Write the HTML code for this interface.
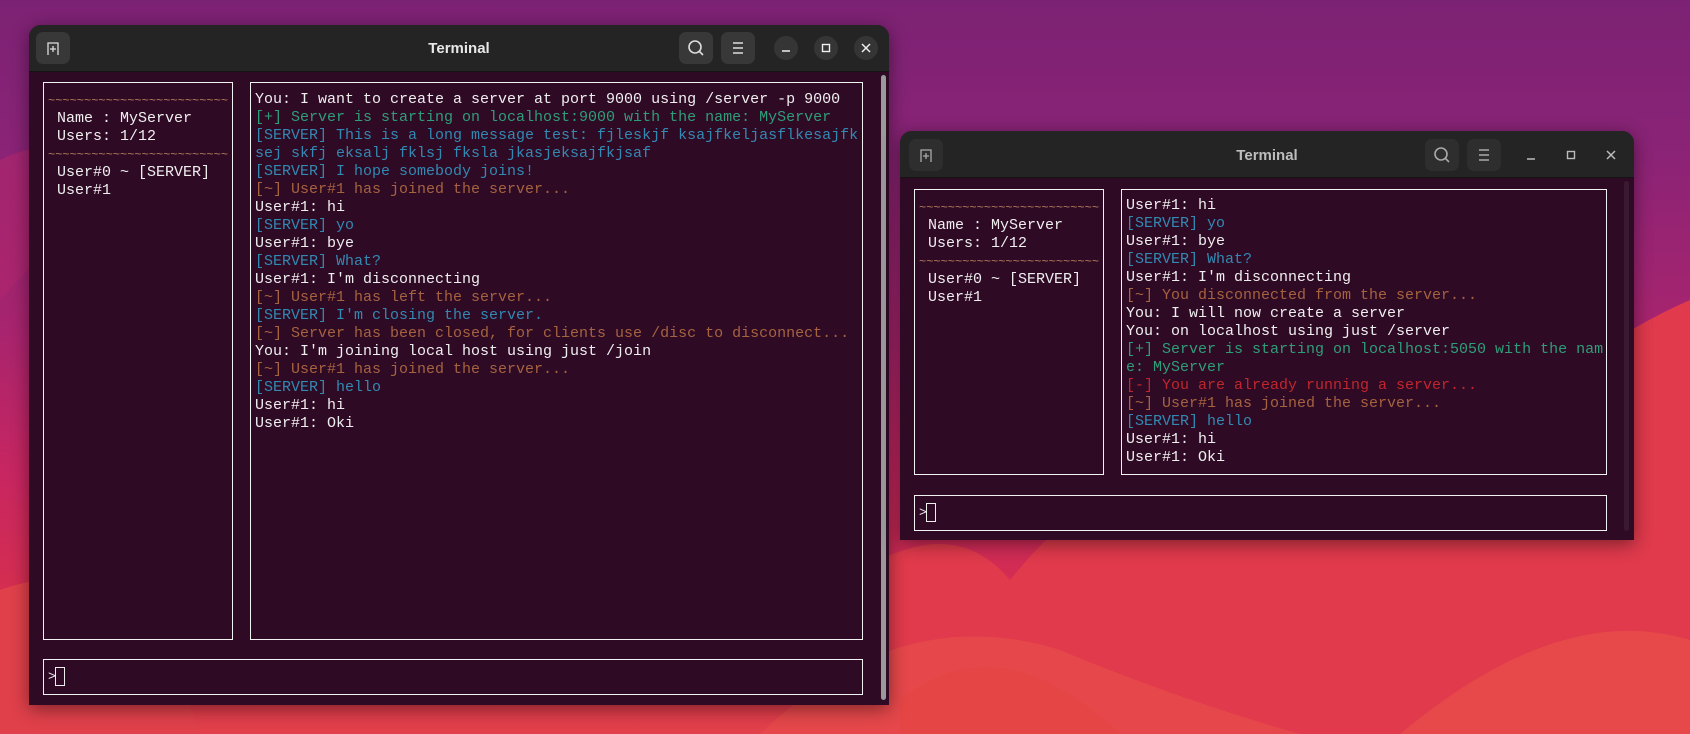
<!DOCTYPE html>
<html><head><meta charset="utf-8"><style>
*{margin:0;padding:0;box-sizing:border-box}
body{width:1690px;height:734px;overflow:hidden;position:relative;background:linear-gradient(180deg,#7c2274 0%,#8a2376 20%,#a8246e 45%,#c82660 65%,#d8304c 85%,#e2404a 100%);font-family:"Liberation Mono",monospace}
.bg{position:absolute;left:0;top:0}
.win{position:absolute;background:#2f0a25;border-radius:12px 12px 0 0;overflow:hidden;box-shadow:0 4px 18px rgba(0,0,0,.45)}
.tb{position:absolute;left:0;top:0;right:0;background:#242424;border-bottom:1px solid #141414}
.title{position:absolute;left:0;right:0;text-align:center;font-family:"Liberation Sans",sans-serif;font-weight:bold;font-size:15px;color:#e8e8e8}
.btn{position:absolute;width:34px;height:32px;border-radius:7px;background:#383838}
.circ{position:absolute;width:24px;height:24px;border-radius:50%;background:#353535}
.box{position:absolute;border:1.5px solid #f2f2f2}
.txt{position:absolute;font-size:15px;line-height:18px;white-space:pre;color:#efefef}
.g{color:#2f9e78}.b{color:#3289b2}.o{color:#a5633f}.r{color:#c0262d}
.t{color:#b07a5a;font-size:12px}
.sb{position:absolute;width:5px;border-radius:3px;background:#9a9a9a}
</style></head><body>
<svg class="bg" width="1690" height="734">
<path d="M0 160 Q60 130 120 170 L0 300Z" fill="#b0266c" opacity=".6"/>
<path d="M0 590 Q80 560 160 620 L200 734 L0 734Z" fill="#e0404a"/>
<path d="M880 560 Q960 520 1010 580 Q1140 420 1290 460 Q1400 360 1530 400 Q1620 330 1690 300 L1690 734 L880 734Z" fill="#e03a4c"/>
<path d="M760 734 Q900 600 1060 650 Q1180 700 1300 734Z" fill="#e5474a"/>
<path d="M1400 734 Q1560 600 1690 640 L1690 734Z" fill="#e7484a"/>
<path d="M900 700 Q1000 620 1120 734 L900 734Z" fill="#e64545"/>
</svg>

<!-- Left window -->
<div class="win" style="left:29px;top:25px;width:860px;height:680px">
 <div class="tb" style="height:47px">
  <div class="btn" style="left:7px;top:7px"></div>
  <svg style="position:absolute;left:16px;top:15px" width="16" height="16" viewBox="0 0 16 16"><path d="M3 15V3h10v12" fill="none" stroke="#ddd" stroke-width="1.3"/><path d="M8 6v6M5 9h6" stroke="#ddd" stroke-width="1.3"/></svg>
  <div class="title" style="top:15px">Terminal</div>
  <div class="btn" style="left:650px;top:7px"></div>
  <svg style="position:absolute;left:658px;top:14px" width="18" height="18"><circle cx="8" cy="8" r="6" fill="none" stroke="#ddd" stroke-width="1.6"/><path d="M12 12l4 4" stroke="#ddd" stroke-width="1.6"/></svg>
  <div class="btn" style="left:692px;top:7px"></div>
  <svg style="position:absolute;left:702px;top:16px" width="14" height="14"><path d="M2 2h10M2 7h10M2 12h10" stroke="#ddd" stroke-width="1.4"/></svg>
  <div class="circ" style="left:745px;top:11px"></div>
  <svg style="position:absolute;left:751px;top:17px" width="12" height="12"><path d="M2 9h8" stroke="#eee" stroke-width="1.5"/></svg>
  <div class="circ" style="left:785px;top:11px"></div>
  <svg style="position:absolute;left:791px;top:17px" width="12" height="12"><rect x="2.5" y="2.5" width="7" height="7" fill="none" stroke="#eee" stroke-width="1.4"/></svg>
  <div class="circ" style="left:825px;top:11px"></div>
  <svg style="position:absolute;left:831px;top:17px" width="12" height="12"><path d="M2 2l8 8M10 2l-8 8" stroke="#eee" stroke-width="1.5"/></svg>
 </div>
 <div class="box" style="left:14px;top:57px;width:190px;height:558px"></div>
 <div class="txt" style="left:19px;top:67px"><span class="t">~~~~~~~~~~~~~~~~~~~~~~~~~</span>
 Name : MyServer
 Users: 1/12
<span class="t">~~~~~~~~~~~~~~~~~~~~~~~~~</span>
 User#0 ~ [SERVER]
 User#1</div>
 <div class="box" style="left:221px;top:57px;width:613px;height:558px"></div>
 <div class="txt" style="left:226px;top:66px">You: I want to create a server at port 9000 using /server -p 9000
<span class="g">[+] Server is starting on localhost:9000 with the name: MyServer</span>
<span class="b">[SERVER] This is a long message test: fjleskjf ksajfkeljasflkesajfk
sej skfj eksalj fklsj fksla jkasjeksajfkjsaf</span>
<span class="b">[SERVER] I hope somebody joins!</span>
<span class="o">[~] User#1 has joined the server...</span>
User#1: hi
<span class="b">[SERVER] yo</span>
User#1: bye
<span class="b">[SERVER] What?</span>
User#1: I'm disconnecting
<span class="o">[~] User#1 has left the server...</span>
<span class="b">[SERVER] I'm closing the server.</span>
<span class="o">[~] Server has been closed, for clients use /disc to disconnect...</span>
You: I'm joining local host using just /join
<span class="o">[~] User#1 has joined the server...</span>
<span class="b">[SERVER] hello</span>
User#1: hi
User#1: Oki</div>
 <div class="box" style="left:14px;top:634px;width:820px;height:36px"></div>
 <div class="txt" style="left:19px;top:643px;font-size:13px">&gt;</div>
 <div style="position:absolute;left:26px;top:642px;width:10px;height:19px;border:1.5px solid #eee"></div>
 <div class="sb" style="left:852px;top:50px;height:625px"></div>
</div>

<!-- Right window -->
<div class="win" style="left:900px;top:131px;width:734px;height:409px">
 <div class="tb" style="height:47px">
  <div class="btn" style="left:9px;top:8px;background:#2e2e2e"></div>
  <svg style="position:absolute;left:18px;top:16px" width="16" height="16" viewBox="0 0 16 16"><path d="M3 15V3h10v12" fill="none" stroke="#aaa" stroke-width="1.3"/><path d="M8 6v6M5 9h6" stroke="#aaa" stroke-width="1.3"/></svg>
  <div class="title" style="top:16px;color:#bdbdbd">Terminal</div>
  <div class="btn" style="left:525px;top:8px;background:#2e2e2e"></div>
  <svg style="position:absolute;left:533px;top:15px" width="18" height="18"><circle cx="8" cy="8" r="6" fill="none" stroke="#aaa" stroke-width="1.6"/><path d="M12 12l4 4" stroke="#aaa" stroke-width="1.6"/></svg>
  <div class="btn" style="left:567px;top:8px;background:#2e2e2e"></div>
  <svg style="position:absolute;left:577px;top:17px" width="14" height="14"><path d="M2 2h10M2 7h10M2 12h10" stroke="#aaa" stroke-width="1.4"/></svg>
  <svg style="position:absolute;left:625px;top:18px" width="12" height="12"><path d="M2 10h8" stroke="#bbb" stroke-width="1.5"/></svg>
  <svg style="position:absolute;left:665px;top:18px" width="12" height="12"><rect x="2.5" y="2.5" width="7" height="7" fill="none" stroke="#bbb" stroke-width="1.4"/></svg>
  <svg style="position:absolute;left:705px;top:18px" width="12" height="12"><path d="M2 2l8 8M10 2l-8 8" stroke="#bbb" stroke-width="1.5"/></svg>
 </div>
 <div class="box" style="left:14px;top:58px;width:190px;height:286px"></div>
 <div class="txt" style="left:19px;top:68px"><span class="t">~~~~~~~~~~~~~~~~~~~~~~~~~</span>
 Name : MyServer
 Users: 1/12
<span class="t">~~~~~~~~~~~~~~~~~~~~~~~~~</span>
 User#0 ~ [SERVER]
 User#1</div>
 <div class="box" style="left:221px;top:58px;width:486px;height:286px"></div>
 <div class="txt" style="left:226px;top:66px">User#1: hi
<span class="b">[SERVER] yo</span>
User#1: bye
<span class="b">[SERVER] What?</span>
User#1: I'm disconnecting
<span class="o">[~] You disconnected from the server...</span>
You: I will now create a server
You: on localhost using just /server
<span class="g">[+] Server is starting on localhost:5050 with the nam
e: MyServer</span>
<span class="r">[-] You are already running a server...</span>
<span class="o">[~] User#1 has joined the server...</span>
<span class="b">[SERVER] hello</span>
User#1: hi
User#1: Oki</div>
 <div class="box" style="left:14px;top:364px;width:693px;height:36px"></div>
 <div class="txt" style="left:19px;top:373px;font-size:13px">&gt;</div>
 <div style="position:absolute;left:26px;top:372px;width:10px;height:19px;border:1.5px solid #eee"></div>
 <div class="sb" style="left:724px;top:50px;height:350px;background:#3a1a30"></div>
</div>
</body></html>
